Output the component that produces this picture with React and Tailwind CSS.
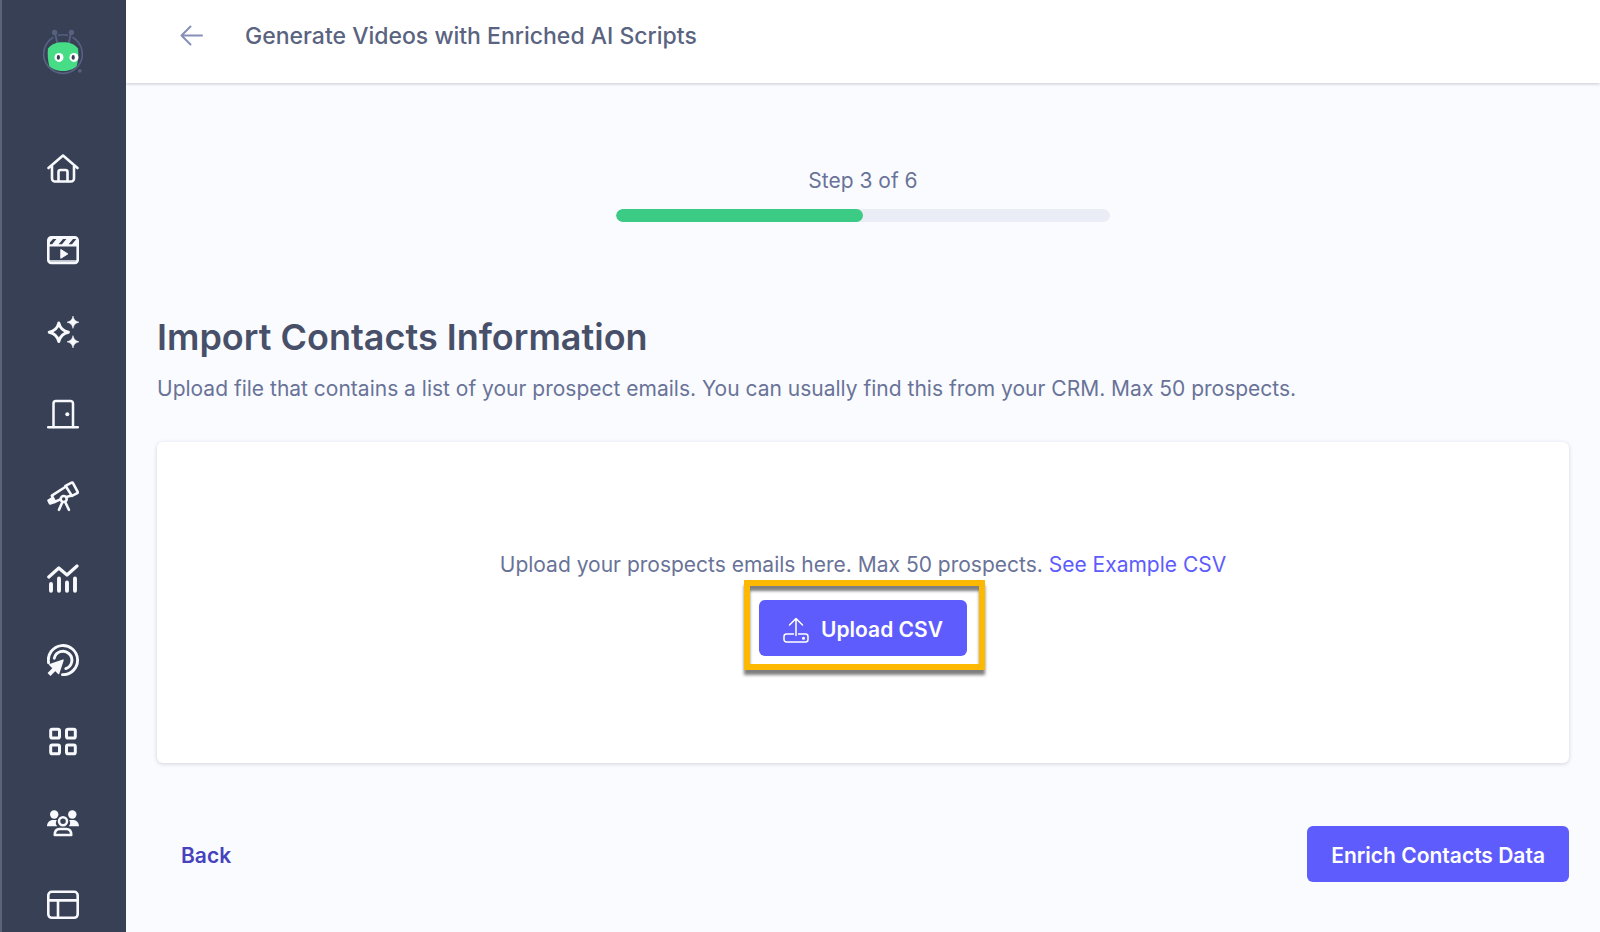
const icons = [
  {
    name: "Home",
    art: (
      <g fill="none" stroke="currentColor" strokeWidth="2.600" strokeLinecap="round" strokeLinejoin="round">
        <path d="M1.500 16 16 3.500 30.500 16" />
        <path d="M5 14.500v12a3 3 0 0 0 3 3h16a3 3 0 0 0 3-3v-12" />
        <path d="M11.500 29v-9a2 2 0 0 1 2-2h5a2 2 0 0 1 2 2v9" />
      </g>
    ),
  },
  {
    name: "Videos",
    art: (
      <g fill="currentColor">
        <rect x="1.300" y="3.200" width="29.400" height="25.800" rx="3" fill="none" stroke="currentColor" strokeWidth="2.600" />
        <path
          fillRule="evenodd"
          d="M2 3h28v9.500H2zM2.800 10.300V8.400L6 4.900h3.400L5.200 10.300zM11.600 10.300 16 4.900h3.400l-4.400 5.400zM21.600 10.300 26 4.900h3.400L25 10.300z"
        />
        <path d="M2 26h28v2H2z" opacity="0.700" />
        <path d="M13.800 15.500v8.800l7-4.400z" stroke="currentColor" strokeWidth="1" strokeLinejoin="round" />
      </g>
    ),
  },
  {
    name: "AI tools",
    art: (
      <g fill="currentColor">
        <path
          d="M11.800 7c1.200 5.200 3.600 7.800 9.600 9.200-6 1.400-8.400 4-9.600 9.300-1.200-5.300-3.600-7.900-9.600-9.300 6-1.400 8.400-4 9.600-9.200z"
          fill="none"
          stroke="currentColor"
          strokeWidth="3"
          strokeLinejoin="round"
        />
        <path d="M26 0c.9 3.800 2.200 5.200 6 6.200-3.800 1-5.100 2.400-6 6.200-.9-3.800-2.200-5.200-6-6.200 3.800-1 5.100-2.400 6-6.200z" stroke="currentColor" strokeWidth=".5" />
        <path d="M26 19.600c.9 3.800 2.200 5.200 6 6.200-3.800 1-5.100 2.400-6 6.200-.9-3.800-2.200-5.200-6-6.200 3.800-1 5.100-2.400 6-6.200z" stroke="currentColor" strokeWidth=".5" />
      </g>
    ),
  },
  {
    name: "Rooms",
    art: (
      <g fill="none" stroke="currentColor" strokeWidth="2.500" strokeLinecap="round">
        <path d="M1.200 29.300h29.600" />
        <path d="M6.500 29V5.500a2.500 2.500 0 0 1 2.500-2.500h14.500a2.500 2.500 0 0 1 2.500 2.500V29" />
        <circle cx="20.300" cy="16.300" r="2" fill="currentColor" stroke="none" />
      </g>
    ),
  },
  {
    name: "Explore",
    art: (
      <g fill="none" stroke="currentColor" strokeWidth="2.600" strokeLinecap="round" strokeLinejoin="round">
        <path d="M18.500 5.800 24.600 2.600a1 1 0 0 1 1.400.5l4.700 8.700a1 1 0 0 1-.4 1.400l-5.400 2.700z" />
        <path d="M19 6.500 4.800 15.600l3.200 6.200 5.400-2.400M24.500 15.500l-5 1.500" />
        <path d="m1.500 20.500 4-2.500 2 4-4.500 1.500z" fill="currentColor" />
        <circle cx="16.700" cy="19" r="3" />
        <path d="m15.400 22-3.400 7.800M18.200 22l3.700 7.800" />
      </g>
    ),
  },
  {
    name: "Analytics",
    art: (
      <g fill="none" stroke="currentColor" strokeWidth="3.200" strokeLinecap="round" strokeLinejoin="round">
        <path d="m1.800 15 10-9 8.200 7L30 4" />
        <path d="M4 22v6.800M12 16.500v12.300M20 20.500v8.300M28 16.500v12.300" strokeWidth="3.900" />
      </g>
    ),
  },
  {
    name: "Campaigns",
    art: (
      <g fill="none" stroke="currentColor" strokeWidth="2.900" strokeLinecap="round">
        <path d="M1.600 18.800A14.600 14.600 0 1 1 15.500 30.700" />
        <path d="M7.300 14.200A8.900 8.900 0 1 1 18.800 24.600" />
        <path d="M2 30.500 9 23.500" strokeWidth="4" strokeLinecap="butt" />
        <path d="M16 16.200 2.800 20.800l8.800 8.600z" fill="currentColor" strokeWidth="1.500" strokeLinejoin="round" />
      </g>
    ),
  },
  {
    name: "Apps",
    art: (
      <g fill="none" stroke="currentColor" strokeWidth="3">
        <rect x="3.700" y="3.200" width="8.800" height="8.800" rx="1.600" />
        <rect x="19.500" y="3.200" width="8.800" height="8.800" rx="1.600" />
        <rect x="3.700" y="19" width="8.800" height="8.800" rx="1.600" />
        <rect x="19.500" y="19" width="8.800" height="8.800" rx="1.600" />
      </g>
    ),
  },
  {
    name: "Team",
    art: (
      <g fill="currentColor">
        <circle cx="7.200" cy="6.500" r="4.200" />
        <circle cx="25.300" cy="6.500" r="4.200" />
        <path d="M0 18.300c0-3.800 2.600-6.400 6-6.400h3.800c-1.500 2.600-1.200 4.600.5 6.400z" />
        <path d="M32 18.300c0-3.800-2.600-6.400-6-6.400h-3.800c1.500 2.600 1.200 4.600-.5 6.400z" />
        <g fill="none" stroke="currentColor" strokeWidth="2.500">
          <circle cx="16" cy="13.300" r="4" />
          <path d="M7.700 27c0-3.800 1.800-6 5-6h6.600c3.200 0 5 2.200 5 6z" strokeLinejoin="round" />
        </g>
      </g>
    ),
  },
  {
    name: "Pages",
    art: (
      <g fill="none" stroke="currentColor" strokeWidth="2.600">
        <rect x="1.300" y="1.800" width="29.400" height="26" rx="3.500" />
        <path d="M1.500 10.400h29M11 10.500v17" />
      </g>
    ),
  },
];

function Logo() {
  return (
    <svg viewBox="0 0 44 48" className="h-12 w-11" aria-hidden="true">
      <g fill="none" stroke="#56607f" strokeWidth="1.700">
        <path d="M12.500 9.200a19.300 19.300 0 1 0 19 0" />
        <path d="M17 7.400a19.300 19.300 0 0 1 10 0" />
        <path d="m14 5 2.500 11M30 5l-2.500 11" strokeWidth="2" />
      </g>
      <circle cx="13.600" cy="4.400" r="2.700" fill="#56607f" />
      <circle cx="30.400" cy="4.400" r="2.700" fill="#56607f" />
      <path
        d="M7 20.500c3.200-4.300 8.600-6.200 15-6.200s11.800 1.900 15 6.200c.8 5.700.2 12.500-1.300 17.500-3.400 3.600-8.300 5-13.700 5s-10.300-1.400-13.700-5C7 33 6.200 26.200 7 20.500z"
        fill="#46dd86"
      />
      <circle cx="18" cy="29.400" r="4.500" fill="#fff" />
      <circle cx="33" cy="29.400" r="4.500" fill="#fff" />
      <ellipse cx="17.400" cy="29.400" rx="1.600" ry="2.300" fill="#384055" />
      <ellipse cx="32.200" cy="29.400" rx="1.600" ry="2.300" fill="#384055" />
      <circle cx="38.800" cy="42.800" r="1.900" fill="#56607f" />
    </svg>
  );
}

function Sidebar() {
  return (
    <aside className="flex w-[126px] shrink-0 flex-col items-center overflow-hidden border-l-2 border-[#5b637a] bg-[#384055] pt-7 pr-[2px]">
      <a href="#home" aria-label="Dashboard">
        <Logo />
      </a>
      <nav aria-label="Main" className="mt-[76px] flex flex-col gap-[50px] text-[#f7f9fd]">
        {icons.map(({ name, art }) => (
          <a key={name} href={"#" + name} aria-label={name} className="block">
            <svg viewBox="0 0 32 32" className="size-8" aria-hidden="true">
              {art}
            </svg>
          </a>
        ))}
      </nav>
    </aside>
  );
}

export default function App() {
  return (
    <div className="flex h-screen overflow-hidden bg-[#fafbff] font-['Inter','Liberation_Sans',sans-serif] text-[#697398]">
      <Sidebar />
      <div className="flex min-w-0 flex-1 flex-col">
        <header className="flex h-[83px] shrink-0 items-center gap-[41px] bg-white px-[54px] pb-[10px] shadow-[0_1px_3px_rgba(50,50,80,0.25)]">
          <button type="button" aria-label="Go back" className="text-[#8690b8]">
            <svg viewBox="0 0 24 24" className="size-6" fill="none" stroke="currentColor" strokeWidth="2" strokeLinecap="round" strokeLinejoin="round" aria-hidden="true">
              <path d="M22 10.500H2M10.500 1.500 1.500 10.500l9 9" />
            </svg>
          </button>
          <h1 className="text-[23px] font-medium text-[#5a6380]">Generate Videos with Enriched AI Scripts</h1>
        </header>
        <main className="px-[31px] pt-[82px]">
          <div className="mx-auto flex w-[35%] flex-col gap-3">
            <label htmlFor="steps" className="text-center text-[21px] leading-8">Step 3 of 6</label>
            <div id="steps" role="progressbar" aria-valuenow={3} aria-valuemin={0} aria-valuemax={6} aria-label="Step 3 of 6" className="h-[13px] overflow-hidden rounded-full bg-[#ebedf6]">
              <div className="h-full w-1/2 rounded-full bg-[#3ccb85]" />
            </div>
          </div>
          <h2 className="mt-[91px] text-[36px] leading-12 font-semibold text-[#485069]">Import Contacts Information</h2>
          <p className="mt-3 text-[21px] leading-8">
            Upload file that contains a list of your prospect emails. You can usually find this from your CRM. Max 50 prospects.
          </p>
          <section className="mt-[37px] flex h-[321px] flex-col items-center rounded-md bg-white pt-[107px] shadow-[0_1px_4px_rgba(50,50,80,0.2)]">
            <p className="text-[21px] leading-8">
              Upload your prospects emails here. Max 50 prospects.{" "}
              <a href="#example" className="text-[#5e5cfc]">See Example CSV</a>
            </p>
            <div className="relative mt-[19px]">
              <button type="button" className="flex h-14 items-center gap-3 rounded-md bg-[#5e5cfc] px-6 pt-1 text-[21px] font-semibold text-white">
                <svg viewBox="0 0 26 26" className="size-[26px]" fill="none" stroke="currentColor" strokeWidth="1.500" strokeLinecap="round" strokeLinejoin="round" aria-hidden="true">
                  <path d="M13 18.500V1.500M6.500 8 13 1.500 19.500 8" />
                  <path d="M10.500 17H3.500a2.500 2.500 0 0 0-2.500 2.500v3a2.500 2.500 0 0 0 2.500 2.500h19a2.500 2.500 0 0 0 2.500-2.500v-3a2.500 2.500 0 0 0-2.500-2.500h-7" />
                  <circle cx="20.500" cy="21.200" r=".8" fill="currentColor" />
                </svg>
                Upload CSV
              </button>
              <div className="pointer-events-none absolute -top-5 -right-[18px] -bottom-[14px] -left-[15px] border-6 border-[#fdb901] shadow-[0_5px_3px_rgba(0,0,0,0.5),inset_0_5px_3px_rgba(0,0,0,0.5)]" />
            </div>
          </section>
          <div className="mt-[63px] flex items-center justify-between">
            <button type="button" className="h-14 px-6 pt-1 text-[21px] font-semibold text-[#4643bd]">Back</button>
            <button type="button" className="h-14 rounded-md bg-[#5e5cfc] px-6 pt-1 text-[21px] font-semibold text-white">Enrich Contacts Data</button>
          </div>
        </main>
      </div>
    </div>
  );
}
